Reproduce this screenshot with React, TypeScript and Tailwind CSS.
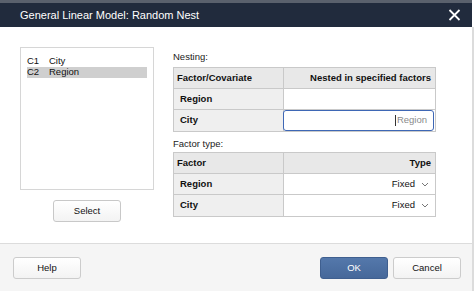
import { useState } from "react";

const Chevron = () => (
    <svg width="8" height="5" viewBox="0 0 8 5" className="ml-[6px]">
        <path d="M1 1 L4 4 L7 1" fill="none" stroke="#777" strokeWidth="1" />
    </svg>
);

const FactorRow = ({ name, last }: { name: string; last?: boolean }) => (
    <div className={`flex h-[21px] ${last ? "" : "border-b border-[#c9c9c9]"}`}>
        <div className="w-[110px] bg-[#efefef] border-r border-[#c9c9c9] pl-[6px] flex items-center font-bold">{name}</div>
        <div className="flex-1 bg-white flex items-center justify-end pr-[6px]">
            <span>Fixed</span>
            <Chevron />
        </div>
    </div>
);

const App = () => {
    const [selected] = useState<string>("C2");
    const columns = [
        { id: "C1", name: "City" },
        { id: "C2", name: "Region" },
    ];

    return (
        <div className="w-[474px] h-[291px] flex bg-white font-['Liberation_Sans',Arial,sans-serif] text-[9.5px] text-[#111]">
            <div className="w-[472px] flex flex-col">
                {/* Title bar */}
                <div className="h-[3px] bg-[#5a616d]"></div>
                <div className="h-[24px] bg-[#212b3d] flex items-center justify-between pl-[20px] pr-[11px] text-white text-[11px]">
                    <span>General Linear Model: Random Nest</span>
                    <svg width="13" height="12" viewBox="0 0 13 12">
                        <path d="M1.5 1 L11.5 11 M11.5 1 L1.5 11" stroke="white" strokeWidth="1.8" />
                    </svg>
                </div>

                {/* Body */}
                <div className="h-[216px] flex pl-[20px]">
                    <div className="w-[134px] pt-[20px] flex flex-col items-center">
                        <div className="w-[134px] h-[143px] border border-[#d6d6d6] pt-[8px] px-[6px]">
                            {columns.map((c) => (
                                <div key={c.id} className={`flex h-[11px] items-center ${selected === c.id ? "bg-[#cfcfcf]" : ""}`}>
                                    <span className="w-[22px]">{c.id}</span>
                                    <span>{c.name}</span>
                                </div>
                            ))}
                        </div>
                        <button className="mt-[10px] w-[68px] h-[22px] rounded-[3px] border border-[#c8c8c8] bg-gradient-to-b from-white to-[#f3f3f3] flex items-center justify-center">Select</button>
                    </div>

                    <div className="ml-[19px] pt-[24px] flex flex-col">
                        <div className="h-[12px] leading-[12px] text-[#222]">Nesting:</div>
                        <div className="mt-[4px] w-[263px] border border-[#c9c9c9]">
                            <div className="flex h-[21px] bg-[#e8e8e8] border-b border-[#c9c9c9] font-bold">
                                <div className="w-[110px] border-r border-[#c9c9c9] pl-[3px] flex items-center">Factor/Covariate</div>
                                <div className="flex-1 flex items-center justify-end pr-[4px]">Nested in specified factors</div>
                            </div>
                            <div className="flex h-[21px] border-b border-[#c9c9c9]">
                                <div className="w-[110px] bg-[#efefef] border-r border-[#c9c9c9] pl-[6px] flex items-center font-bold">Region</div>
                                <div className="flex-1 bg-white"></div>
                            </div>
                            <div className="flex h-[21px]">
                                <div className="w-[110px] bg-[#efefef] border-r border-[#c9c9c9] pl-[6px] flex items-center font-bold">City</div>
                                <div className="flex-1 bg-white relative">
                                    <div className="absolute left-[-1px] right-[1px] top-[0px] bottom-[0px] border-[1.5px] border-[#3e67b5] rounded-[3px] flex items-center justify-end pr-[6px] text-[#8a8a8a]">
                                        <span className="w-px h-[11px] bg-[#333] mr-[1px]"></span>
                                        <span>Region</span>
                                    </div>
                                </div>
                            </div>
                        </div>

                        <div className="mt-[6px] h-[12px] leading-[12px] text-[#222]">Factor type:</div>
                        <div className="mt-[2px] w-[263px] border border-[#c9c9c9]">
                            <div className="flex h-[21px] bg-[#e8e8e8] border-b border-[#c9c9c9] font-bold">
                                <div className="w-[110px] border-r border-[#c9c9c9] pl-[3px] flex items-center">Factor</div>
                                <div className="flex-1 flex items-center justify-end pr-[4px]">Type</div>
                            </div>
                            <FactorRow name="Region" />
                            <FactorRow name="City" last />
                        </div>
                    </div>
                </div>

                {/* Footer */}
                <div className="flex-1 border-t border-[#dcdcdc] bg-[#f5f5f5] flex items-start justify-between pt-[13px] pl-[13px] pr-[11px]">
                    <button className="w-[68px] h-[22px] rounded-[3px] border border-[#cccccc] bg-gradient-to-b from-white to-[#f3f3f3] flex items-center justify-center">Help</button>
                    <div className="flex gap-[5px]">
                        <button className="w-[68px] h-[22px] rounded-[3px] border border-[#3f5f8f] bg-gradient-to-b from-[#5478ab] to-[#46689a] text-white flex items-center justify-center">OK</button>
                        <button className="w-[68px] h-[22px] rounded-[3px] border border-[#cccccc] bg-gradient-to-b from-white to-[#f3f3f3] flex items-center justify-center">Cancel</button>
                    </div>
                </div>
            </div>
            <div className="w-[2px] flex flex-col">
                <div className="h-[27px] bg-white"></div>
                <div className="flex-1 bg-[#dcdcdc]"></div>
            </div>
        </div>
    );
};

export default App;
